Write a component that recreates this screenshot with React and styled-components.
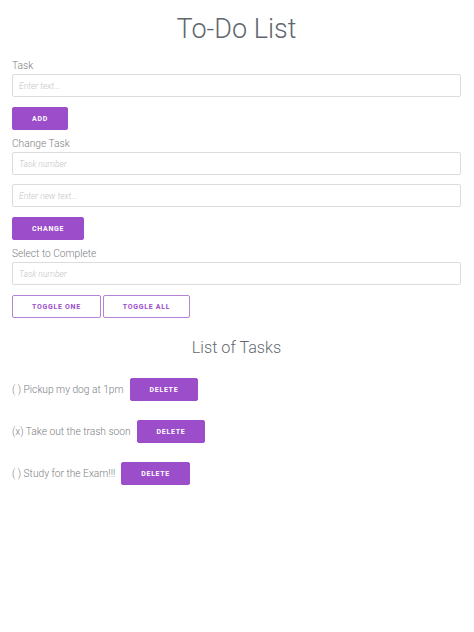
import React from 'react';
import styled, { createGlobalStyle } from 'styled-components';

const GlobalStyle = createGlobalStyle`
    body {
        margin: 0;
        background: #fff;
        font-family: Roboto, "Liberation Sans", sans-serif;
        font-weight: 300;
        color: #7b8085;
    }
`;

const Page = styled.div`
    padding: 0 13px 40px 12px;
`;

const Title = styled.h1`
    margin: 0 0 12px;
    padding-top: 11px;
    text-align: center;
    font-size: 27px;
    line-height: 36px;
    font-weight: 300;
    color: #5f676e;
`;

const SubTitle = styled.h2`
    margin: 18px 0 18px;
    text-align: center;
    font-size: 16.2px;
    line-height: 24px;
    font-weight: 300;
    color: #62696f;
`;

const Label = styled.label`
    display: block;
    font-size: 10.2px;
    line-height: 14px;
    margin-bottom: 1px;
`;

const Input = styled.input`
    display: block;
    box-sizing: border-box;
    width: 100%;
    height: 23px;
    margin: 0 0 ${p => p.$gap || 10}px;
    padding: 0 6px;
    border: 1px solid #dcdcdc;
    border-radius: 2px;
    background: #fff;
    font-family: Roboto, sans-serif;
    font-size: 8.6px;
    color: #606c76;
    outline: none;

    &::placeholder {
        color: #c4c4c4;
        font-style: italic;
        font-weight: 300;
    }
`;

const Button = styled.button`
    box-sizing: border-box;
    height: 23px;
    padding: 0 19px;
    border: 1px solid ${p => (p.$outline ? '#b483d8' : '#9b4dca')};
    border-radius: 2px;
    background: ${p => (p.$outline ? '#fff' : '#9b4dca')};
    color: ${p => (p.$outline ? '#9b4dca' : '#fff')};
    font-family: Roboto, "Liberation Sans", sans-serif;
    font-size: 7px;
    font-weight: 700;
    letter-spacing: 0.7px;
    text-transform: uppercase;
    cursor: pointer;
    white-space: nowrap;
`;

const Actions = styled.div`
    display: flex;
    gap: 2px;
    margin-bottom: ${p => p.$gap || 7}px;
`;

const TaskList = styled.div`
    display: flex;
    flex-direction: column;
    gap: 19px;
`;

const TaskRow = styled.div`
    display: flex;
    align-items: center;
    gap: 6px;
`;

const TaskText = styled.span`
    font-size: 10.2px;
`;

const tasks = [
    { text: 'Pickup my dog at 1pm', done: false },
    { text: 'Take out the trash soon', done: true },
    { text: 'Study for the Exam!!!', done: false },
];

const App = () => {
    return (
        <Page>
            <GlobalStyle />
            <Title>To-Do List</Title>

            <Label>Task</Label>
            <Input placeholder="Enter text..." />
            <Actions>
                <Button>Add</Button>
            </Actions>

            <Label>Change Task</Label>
            <Input placeholder="Task number" $gap={9} />
            <Input placeholder="Enter new text..." />
            <Actions>
                <Button>Change</Button>
            </Actions>

            <Label>Select to Complete</Label>
            <Input placeholder="Task number" />
            <Actions $gap={0}>
                <Button $outline>Toggle One</Button>
                <Button $outline>Toggle All</Button>
            </Actions>

            <SubTitle>List of Tasks</SubTitle>
            <TaskList>
                {tasks.map(t => (
                    <TaskRow key={t.text}>
                        <TaskText>({t.done ? 'x' : ' '}) {t.text}</TaskText>
                        <Button>Delete</Button>
                    </TaskRow>
                ))}
            </TaskList>
        </Page>
    );
};

export default App;
